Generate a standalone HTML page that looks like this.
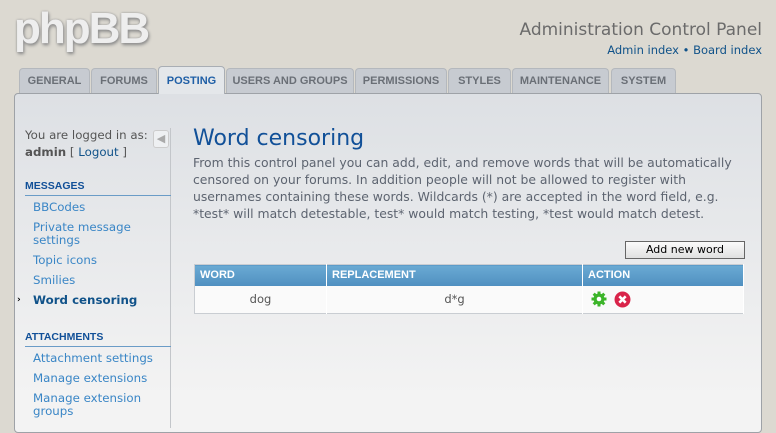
<!DOCTYPE html>
<html><head><meta charset="utf-8"><style>
*{margin:0;padding:0;box-sizing:border-box}
body{width:776px;height:422px;overflow:hidden;background:#dcd9d1;font-family:"DejaVu Sans","Liberation Sans",sans-serif;position:relative}
.logo{position:absolute;left:14px;top:4px;font:bold 44px "Liberation Sans",sans-serif;color:#eee;letter-spacing:-2px;text-shadow:0 0 2px #999,1px 2px 3px #888}
.acp{position:absolute;right:14px;top:20px;font-size:17px;color:#6b6b6b}
.links{position:absolute;right:14px;top:43px;font-size:11.5px;color:#105289}
.tab{position:absolute;top:68px;height:25px;background:#c7cbd1;border:1px solid #b4b8bd;border-bottom:none;border-radius:4px 4px 0 0;font:bold 11px "Liberation Sans",sans-serif;color:#6a6f76;text-align:center;line-height:24px}
.tab.act{background:#e4e7ea;color:#1f5fa6;top:66px;height:28px;line-height:28px;z-index:2;border-color:#a9aeb4}
.panel{position:absolute;left:14px;top:93px;width:748px;height:340px;border:1px solid #9ea2a7;border-radius:4px;background:linear-gradient(#dde0e4,#f3f3f3 300px)}
.side{position:absolute;left:25px;top:127px;width:146px;font-size:11.8px;color:#555}
.side .top{line-height:17px}
.vline{position:absolute;left:170px;top:128px;width:1px;height:300px;background:#c3c6ca}
.sh{font:bold 10.5px "Liberation Sans",sans-serif;color:#115098;border-bottom:1px solid #6a9cc7;padding-bottom:3px;margin-top:19px}
.si{color:#3a86c6;padding-left:8px;margin-top:7px;line-height:13px}
h1{position:absolute;left:193px;top:126px;font:normal 22px "DejaVu Sans",sans-serif;color:#115098}
.desc{position:absolute;left:193px;top:154px;width:555px;font-size:12.4px;line-height:17px;color:#5d6470}
.btn{position:absolute;left:625px;top:241px;width:120px;height:18px;border:1px solid #666;background:linear-gradient(#fbfbfb,#e0e0e0);font-size:11px;text-align:center;line-height:16px;color:#000}
table{position:absolute;left:194px;top:264px;width:550px;border-collapse:collapse;border:1px solid #c9cdd2;background:#fafafa;font-size:11.5px}
th{background:linear-gradient(#6aaad3,#4f8fc0);color:#fff;font:bold 11px "Liberation Sans",sans-serif;text-align:left;padding:0 5px;height:21px;border-right:1px solid #fff}
td{height:28px;text-align:center;color:#555;border-right:1px solid #fff}
</style></head><body>
<div class="logo">phpBB</div>
<div class="acp">Administration Control Panel</div>
<div class="links">Admin index • Board index</div>
<div class="tab" style="left:19px;width:71px">GENERAL</div>
<div class="tab" style="left:91px;width:66px">FORUMS</div>
<div class="tab act" style="left:158px;width:67px">POSTING</div>
<div class="tab" style="left:226px;width:128px">USERS AND GROUPS</div>
<div class="tab" style="left:355px;width:92px">PERMISSIONS</div>
<div class="tab" style="left:448px;width:63px">STYLES</div>
<div class="tab" style="left:512px;width:97px">MAINTENANCE</div>
<div class="tab" style="left:611px;width:65px">SYSTEM</div>
<div class="panel"></div>
<div style="position:absolute;left:153px;top:130px;width:16px;height:18px;background:#eef0f2;border:1px solid #ccc;border-radius:3px;color:#aaa;font-size:11px;line-height:16px;text-align:center">◀</div>
<div class="vline"></div>
<div class="side">
<div class="top">You are logged in as:</div>
<div class="top"><b>admin</b> [ <span style="color:#105289">Logout</span> ]</div>
<div class="sh">MESSAGES</div>
<div class="si" style="margin-top:5px">BBCodes</div>
<div class="si">Private message settings</div>
<div class="si">Topic icons</div>
<div class="si">Smilies</div>
<div class="si" style="color:#105289;font-weight:bold;position:relative"><span style="position:absolute;left:-8px;color:#000;font-size:9px">›</span>Word censoring</div>
<div class="sh" style="margin-top:24px">ATTACHMENTS</div>
<div class="si" style="margin-top:5px">Attachment settings</div>
<div class="si">Manage extensions</div>
<div class="si">Manage extension groups</div>
</div>
<h1>Word censoring</h1>
<div class="desc">From this control panel you can add, edit, and remove words that will be automatically censored on your forums. In addition people will not be allowed to register with usernames containing these words. Wildcards (*) are accepted in the word field, e.g. *test* will match detestable, test* would match testing, *test would match detest.</div>
<div class="btn">Add new word</div>
<table><tr><th style="width:132px">WORD</th><th style="width:256px">REPLACEMENT</th><th>ACTION</th></tr>
<tr><td>dog</td><td>d*g</td><td style="text-align:left;padding-left:8px">
<svg width="16" height="16" viewBox="0 0 16 16" style="vertical-align:middle"><g fill="#3cb52a"><circle cx="8" cy="8" r="5.5"/><rect x="6.5" y="0.5" width="3" height="15"/><rect x="0.5" y="6.5" width="15" height="3"/><rect x="6.5" y="0.5" width="3" height="15" transform="rotate(45 8 8)"/><rect x="6.5" y="0.5" width="3" height="15" transform="rotate(-45 8 8)"/></g><circle cx="8" cy="8" r="2.3" fill="#fff"/></svg>
<svg width="17" height="17" viewBox="0 0 16 16" style="vertical-align:middle;margin-left:3px"><circle cx="8" cy="8" r="7.5" fill="#d9244a"/><path d="M5 5L11 11M11 5L5 11" stroke="#fff" stroke-width="2.4"/></svg>
</td></tr></table>
</body></html>
